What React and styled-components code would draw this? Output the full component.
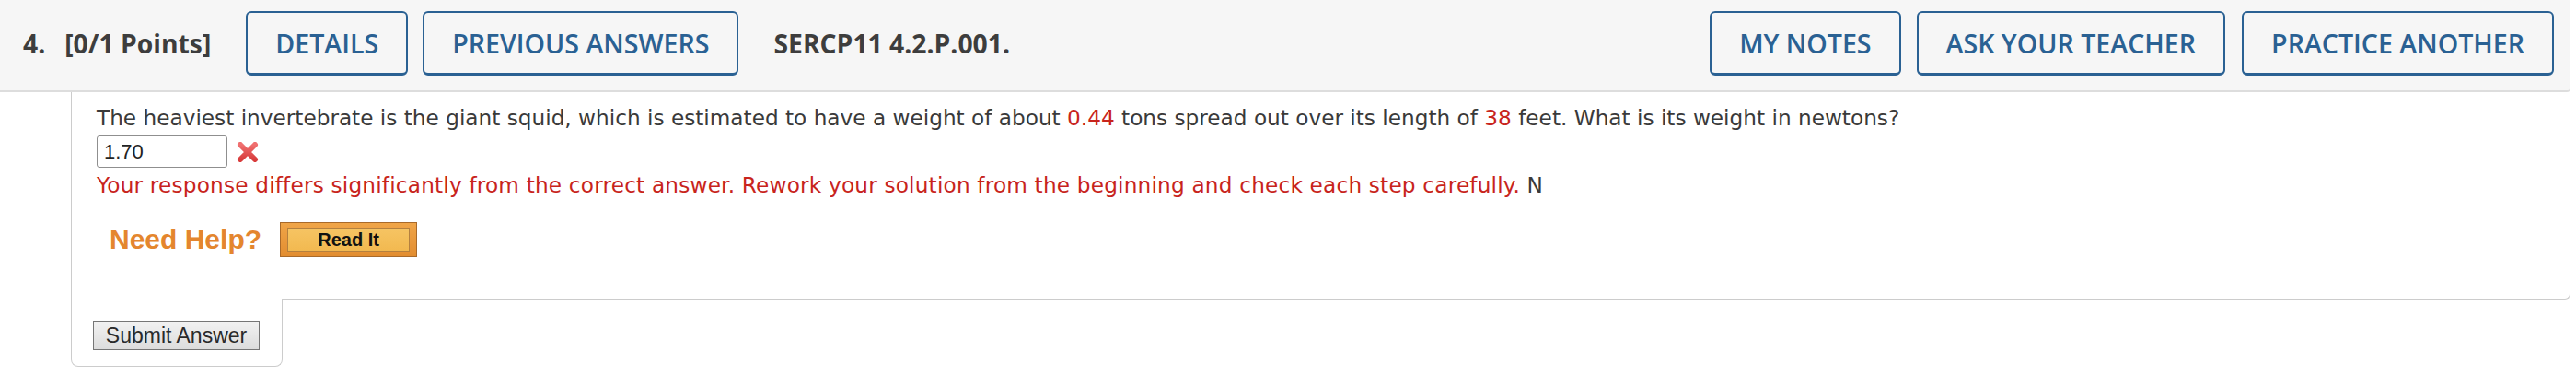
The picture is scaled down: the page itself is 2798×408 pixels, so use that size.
import React from "react";
import styled, { createGlobalStyle } from "styled-components";

const Global = createGlobalStyle`
  html, body { margin: 0; padding: 0; background: #ffffff; }
  body { font-family: "DejaVu Sans", Verdana, sans-serif; }
`;

const Page = styled.div`
  width: 2798px;
`;

const Header = styled.div`
  box-sizing: border-box;
  width: 2792px;
  height: 100px;
  display: flex;
  align-items: flex-start;
  padding: 12px 17px 0 25px;
  background: #f6f6f6;
  border-right: 1px solid #dedede;
  border-bottom: 2px solid #dddddd;
  border-bottom-right-radius: 4px;
  font-family: "Open Sans", sans-serif;
`;

const HeadText = styled.span`
  height: 70px;
  display: flex;
  align-items: center;
  font-size: 28.3px;
  font-weight: 700;
  color: #3d3d3d;
  margin-right: ${(p) => p.$gap || 0}px;
  white-space: nowrap;
`;

const OutlineButton = styled.button`
  box-sizing: border-box;
  height: 70px;
  padding: 0 30px;
  margin-right: ${(p) => p.$gap || 0}px;
  border: 2px solid #2a6193;
  border-bottom-width: 3px;
  border-radius: 6px;
  background: transparent;
  color: #2a6193;
  font-family: "Open Sans", sans-serif;
  font-size: 28.6px;
  font-weight: 600;
  white-space: nowrap;
  display: flex;
  align-items: center;
  justify-content: center;
`;

const Spacer = styled.div`
  flex: 1;
`;

const Body = styled.div`
  margin-left: 77px;
  width: 2715px;
  display: flex;
  flex-direction: column;
  align-items: flex-start;
`;

const Panel = styled.div`
  box-sizing: border-box;
  width: 100%;
  padding: 15px 26px 45px 27px;
  border: 1px solid #cccccc;
  border-top: none;
  border-bottom-right-radius: 6px;
  color: #3a3a3a;
  font-family: "DejaVu Sans", Verdana, sans-serif;
  font-size: 23.2px;
  line-height: 26px;
`;

const Line = styled.div`
  color: ${(p) => (p.$error ? "#c8241c" : "#3a3a3a")};
  letter-spacing: ${(p) => (p.$error ? "0.19px" : "0")};
  white-space: nowrap;
`;

const Num = styled.span`
  color: #c8241c;
`;

const Tail = styled.span`
  color: #3a3a3a;
`;

const AnswerRow = styled.div`
  display: flex;
  align-items: center;
  gap: 10px;
  margin: 6px 0 6px 0;
`;

const AnswerInput = styled.div`
  box-sizing: border-box;
  width: 142px;
  height: 35px;
  padding: 0 7px;
  border: 1px solid #8f8f8f;
  border-radius: 3px;
  display: flex;
  align-items: center;
  font-family: "Liberation Sans", Arial, sans-serif;
  font-size: 22px;
  color: #222222;
  background: #ffffff;
`;

const HelpRow = styled.div`
  display: flex;
  align-items: center;
  margin-top: 27px;
  padding-left: 14px;
  gap: 20px;
`;

const NeedHelp = styled.span`
  font-family: "Liberation Sans", Arial, sans-serif;
  font-weight: 700;
  font-size: 30px;
  color: #e4862e;
  line-height: 38px;
`;

const ReadItOuter = styled.div`
  box-sizing: border-box;
  width: 149px;
  height: 38px;
  padding: 5px 7px;
  border: 1px solid #a96a2a;
  background: linear-gradient(#f0a548, #e28d30);
  display: flex;
`;

const ReadItInner = styled.div`
  flex: 1;
  border: 1px solid #b4803f;
  background: linear-gradient(#f6c463, #f2b950);
  display: flex;
  align-items: center;
  justify-content: center;
  font-family: "Liberation Sans", Arial, sans-serif;
  font-weight: 700;
  font-size: 20px;
  color: #111111;
`;

const SubmitTab = styled.div`
  box-sizing: border-box;
  width: 230px;
  margin-top: -1px;
  padding: 24px 24px 17px 23px;
  background: #ffffff;
  border: 1px solid #cccccc;
  border-top: none;
  border-radius: 0 0 8px 8px;
`;

const SubmitButton = styled.button`
  box-sizing: border-box;
  width: 181px;
  height: 32px;
  padding: 0;
  border: 1px solid #767676;
  background: linear-gradient(#f2f2f2, #dcdcdc);
  font-family: "Liberation Sans", Arial, sans-serif;
  font-size: 23px;
  color: #2a2a2a;
  display: flex;
  align-items: center;
  justify-content: center;
`;

const WrongMark = () => (
  <svg width="24" height="22" viewBox="0 0 24 22">
    <defs>
      <linearGradient id="xg" x1="0" y1="0" x2="0" y2="1">
        <stop offset="0" stopColor="#f07070" />
        <stop offset="1" stopColor="#d83c3c" />
      </linearGradient>
    </defs>
    <path
      d="M4 3 L20 19 M20 3 L4 19"
      stroke="url(#xg)"
      strokeWidth="6"
      strokeLinecap="round"
      fill="none"
    />
  </svg>
);

export default function App() {
  return (
    <Page>
      <Global />
      <Header>
        <HeadText $gap={21}>4.</HeadText>
        <HeadText $gap={38}>[0/1 Points]</HeadText>
        <OutlineButton $gap={16}>DETAILS</OutlineButton>
        <OutlineButton $gap={38}>PREVIOUS ANSWERS</OutlineButton>
        <HeadText>SERCP11 4.2.P.001.</HeadText>
        <Spacer />
        <OutlineButton $gap={17}>MY NOTES</OutlineButton>
        <OutlineButton $gap={18}>ASK YOUR TEACHER</OutlineButton>
        <OutlineButton>PRACTICE ANOTHER</OutlineButton>
      </Header>
      <Body>
        <Panel>
          <Line>
            The heaviest invertebrate is the giant squid, which is estimated to
            have a weight of about <Num>0.44</Num> tons spread out over its
            length of <Num>38</Num> feet. What is its weight in newtons?
          </Line>
          <AnswerRow>
            <AnswerInput>1.70</AnswerInput>
            <WrongMark />
          </AnswerRow>
          <Line $error>
            Your response differs significantly from the correct answer. Rework
            your solution from the beginning and check each step carefully.{" "}
            <Tail>N</Tail>
          </Line>
          <HelpRow>
            <NeedHelp>Need Help?</NeedHelp>
            <ReadItOuter>
              <ReadItInner>Read It</ReadItInner>
            </ReadItOuter>
          </HelpRow>
        </Panel>
        <SubmitTab>
          <SubmitButton>Submit Answer</SubmitButton>
        </SubmitTab>
      </Body>
    </Page>
  );
}
